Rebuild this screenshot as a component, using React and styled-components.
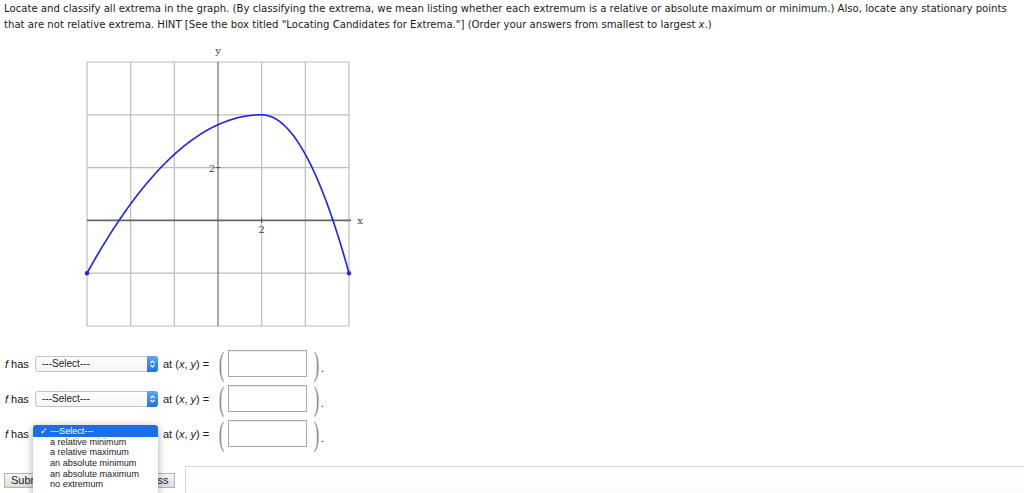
import React from 'react'
import styled, { createGlobalStyle } from 'styled-components'

const GlobalStyle = createGlobalStyle`
  html, body {
    margin: 0;
    padding: 0;
    background: #fff;
    overflow: hidden;
  }
  body {
    font-family: 'DejaVu Sans', Verdana, sans-serif;
    color: #111;
  }
`

const Page = styled.div`
  width: 1024px;
  height: 493px;
  overflow: hidden;
  position: relative;
`

const Question = styled.p`
  margin: 0;
  padding: 1px 4px 0;
  font-size: 10.13px;
  line-height: 16px;
  color: #1a1a1a;
  white-space: nowrap;
`

const GraphWrap = styled.div`
  margin: 7px 0 0 80px;
  width: 290px;
  height: 290px;

  svg {
    display: block;
  }
`

const Form = styled.div`
  margin-top: 16px;
`

const Row = styled.div`
  height: 35px;
  display: flex;
  align-items: center;
  padding-left: 5px;
  font-family: 'Liberation Sans', Arial, sans-serif;
  font-size: 11px;
  color: #111;
`

const Has = styled.span`
  width: 30px;

  i {
    font-style: italic;
  }
`

const SelectSlot = styled.div`
  position: relative;
  width: 123px;
  height: 16px;
`

const SelectBox = styled.div`
  height: 16px;
  box-sizing: border-box;
  border: 1px solid #c4c4c4;
  border-radius: 3px;
  background: linear-gradient(#ffffff, #f4f4f4);
  display: flex;
  align-items: center;
  font-size: 10px;
  color: #222;
  padding-left: 6px;
  position: relative;
`

const Arrows = styled.span`
  position: absolute;
  right: -1px;
  top: -1px;
  width: 11px;
  height: 16px;
  border-radius: 0 3px 3px 0;
  background: linear-gradient(#5aa6f8, #1f72e6);
  display: flex;
  align-items: center;
  justify-content: center;
`

const Menu = styled.ul`
  position: absolute;
  z-index: 5;
  left: -2px;
  top: -1px;
  width: 125px;
  margin: 0;
  padding: 0 0 4px;
  list-style: none;
  background: #fff;
  box-shadow: 0 2px 8px rgba(0, 0, 0, 0.35);
  border-radius: 4px;
  font-family: 'Liberation Sans', Arial, sans-serif;
  font-size: 9.1px;
  color: #222;
`

const MenuItem = styled.li`
  height: ${({ $active }) => ($active ? '12px' : '10.7px')};
  line-height: ${({ $active }) => ($active ? '12px' : '10.7px')};
  padding-left: 17px;
  position: relative;
  background: ${({ $active }) => ($active ? '#1c6ee6' : 'transparent')};
  color: ${({ $active }) => ($active ? '#fff' : '#222')};
  border-radius: ${({ $active }) => ($active ? '3px 3px 0 0' : '0')};
`

const Check = styled.span`
  position: absolute;
  left: 7px;
  top: 0;
`

const AtLabel = styled.span`
  margin-left: 5px;
  width: 54px;
  color: #1a1a1a;

  i {
    font-style: italic;
  }
`

const Paren = styled.span`
  display: inline-block;
  font-family: 'Liberation Serif', 'Times New Roman', serif;
  font-size: 33px;
  line-height: 28px;
  color: #888;
  transform: scaleX(0.5);
  margin: 0 -1px;
`

const AnswerInput = styled.div`
  width: 79px;
  height: 27px;
  box-sizing: border-box;
  border: 1px solid #aaa;
  box-shadow: inset 0 1px 1px rgba(0, 0, 0, 0.08);
  margin: 0 5px 0 2px;
  background: #fff;
`

const Dot = styled.span`
  font-size: 11px;
  margin-top: 8px;
`

const Bottom = styled.div`
  margin-top: 15px;
  display: flex;
  align-items: flex-start;
`

const Button = styled.div`
  margin-top: 7px;
  margin-left: ${({ $ml }) => $ml}px;
  height: 15px;
  box-sizing: border-box;
  padding: 0 6px;
  border: 1px solid #b4b4b4;
  background: linear-gradient(#f6f6f6, #dcdcdc);
  font-family: 'Liberation Sans', Arial, sans-serif;
  font-size: 11px;
  line-height: 13px;
  color: #222;
  white-space: nowrap;
`

const Feedback = styled.div`
  margin-left: 10px;
  flex: 1;
  height: 40px;
  border: 1px solid #d6d6d6;
  border-right: none;
  background: linear-gradient(#ffffff, #fafafa);
`

const X0 = 138
const Y0 = 180.4
const SX = 21.8333
const SY = 26.4
const px = (v) => X0 + v * SX
const py = (v) => Y0 - v * SY

const f = (x) => (x <= 2 ? 4 - 0.09375 * (x - 2) ** 2 : 4 - 0.375 * (x - 2) ** 2)

const curvePath = () => {
  const pts = []
  for (let i = 0; i <= 240; i++) {
    const x = -6 + (12 * i) / 240
    pts.push(`${px(x).toFixed(2)},${py(f(x)).toFixed(2)}`)
  }
  return 'M' + pts.join(' L')
}

const Graph = () => {
  const cols = [0, 1, 2, 3, 4, 5, 6].map((i) => 7 + i * 43.667)
  const rows = [0, 1, 2, 3, 4, 5].map((j) => 22 + j * 52.8)
  return (
    <svg width='290' height='290' viewBox='0 0 290 290'>
      {cols.map((x, i) =>
        i === 3 ? null : (
          <line key={'c' + i} x1={x} y1={22} x2={x} y2={286} stroke='#bdbdbd' strokeWidth='1.2' />
        )
      )}
      {rows.map((y, j) =>
        j === 3 ? null : (
          <line key={'r' + j} x1={7} y1={y} x2={269} y2={y} stroke='#bdbdbd' strokeWidth='1.2' />
        )
      )}
      <line x1={X0} y1={22} x2={X0} y2={286} stroke='#555' strokeWidth='1' />
      <line x1={7} y1={Y0} x2={271} y2={Y0} stroke='#666' strokeWidth='1.6' />
      <line x1={X0 - 2.5} y1={py(2)} x2={X0 + 2.5} y2={py(2)} stroke='#555' strokeWidth='1' />
      <line x1={px(2)} y1={Y0 - 2.5} x2={px(2)} y2={Y0 + 2.5} stroke='#555' strokeWidth='1' />
      <g fontFamily="'DejaVu Serif', 'Liberation Serif', serif" fontSize='10' fill='#444'>
        <text x={X0} y={14} textAnchor='middle'>y</text>
        <text x={280} y={184} textAnchor='middle'>x</text>
        <text x={X0 - 3} y={py(2) + 4} textAnchor='end'>2</text>
        <text x={px(2)} y={Y0 + 13} textAnchor='middle'>2</text>
      </g>
      <path d={curvePath()} fill='none' stroke='#1f1fef' strokeWidth='1.6' />
      <circle cx={px(-6)} cy={py(-2)} r='2.2' fill='#2b2bd6' />
      <circle cx={px(6)} cy={py(-2)} r='2.2' fill='#2b2bd6' />
    </svg>
  )
}

const ArrowIcon = () => (
  <svg width='7' height='10' viewBox='0 0 7 10'>
    <path d='M1.5 4 L3.5 2 L5.5 4 M1.5 6 L3.5 8 L5.5 6' fill='none' stroke='#fff' strokeWidth='1.1' />
  </svg>
)

const options = ['a relative minimum', 'a relative maximum', 'an absolute minimum', 'an absolute maximum', 'no extremum']

const AnswerRow = ({ open }) => (
  <Row>
    <Has>
      <i>f</i> has
    </Has>
    <SelectSlot>
      <SelectBox>
        {open ? '' : '---Select---'}
        <Arrows>
          <ArrowIcon />
        </Arrows>
      </SelectBox>
      {open && (
        <Menu>
          <MenuItem $active>
            <Check>✓</Check>---Select---
          </MenuItem>
          {options.map((o) => (
            <MenuItem key={o}>{o}</MenuItem>
          ))}
        </Menu>
      )}
    </SelectSlot>
    <AtLabel>
      at (<i>x</i>, <i>y</i>) =
    </AtLabel>
    <Paren>(</Paren>
    <AnswerInput />
    <Paren>)</Paren>
    <Dot>.</Dot>
  </Row>
)

export default function App() {
  return (
    <Page>
      <GlobalStyle />
      <Question>
        Locate and classify all extrema in the graph. (By classifying the extrema, we mean listing whether each
        extremum is a relative or absolute maximum or minimum.) Also, locate any stationary points
        <br />
        that are not relative extrema. HINT [See the box titled "Locating Candidates for Extrema."] (Order your
        answers from smallest to largest <i>x</i>.)
      </Question>
      <GraphWrap>
        <Graph />
      </GraphWrap>
      <Form>
        <AnswerRow />
        <AnswerRow />
        <AnswerRow open />
      </Form>
      <Bottom>
        <Button $ml={4}>Submit</Button>
        <Button $ml={37}>Save Progress</Button>
        <Feedback />
      </Bottom>
    </Page>
  )
}
